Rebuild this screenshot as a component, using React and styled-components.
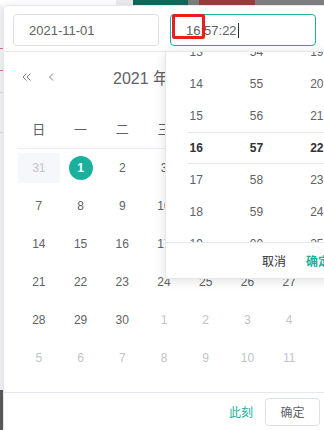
import React from 'react';
import styled, { createGlobalStyle } from 'styled-components';

const GlobalStyle = createGlobalStyle`
  html, body {
    margin: 0;
    padding: 0;
    background: #ffffff;
  }
  body {
    font-family: "Liberation Sans", "Noto Sans CJK SC", sans-serif;
  }
  * {
    box-sizing: border-box;
  }
`;

const TEAL = '#1bb09c';

const Page = styled.div`
  position: relative;
  width: 324px;
  height: 430px;
  overflow: hidden;
  display: grid;
  grid-template-rows: 5px 1fr;
  background: #ffffff;
`;

const TopStrip = styled.div`
  display: flex;
`;

const StripBlock = styled.div`
  width: ${(p) => p.w}px;
  flex: ${(p) => (p.grow ? 1 : 'none')};
  background: ${(p) => p.color};
`;

const SideArea = styled.div`
  display: flex;
`;

const LeftStrip = styled.div`
  width: 3px;
  display: flex;
  flex-direction: column;
  background: #f4f4f6;
`;

const StripSeg = styled.div`
  height: ${(p) => p.h}px;
  flex: ${(p) => (p.grow ? 1 : 'none')};
  background: ${(p) => p.color || 'transparent'};
  border-bottom: ${(p) => (p.line ? `1px solid ${p.line}` : 'none')};
`;

/* the date-time picker popup */
const Popup = styled.div`
  position: absolute;
  left: 3px;
  top: 5px;
  width: 330px;
  background: #ffffff;
  border: 1px solid #e4e7ed;
  border-radius: 4px;
  box-shadow: 0 2px 12px rgba(0, 0, 0, 0.1);
  color: #606266;
`;

const PanelHeader = styled.div`
  display: flex;
  gap: 11px;
  padding: 8px 9px 5px;
  border-bottom: 1px solid #e4e7ed;
`;

const Field = styled.div`
  position: relative;
  width: 146px;
  height: 32px;
  display: flex;
  align-items: center;
  padding: 0 15px;
  border: 1px solid ${(p) => (p.active ? TEAL : '#dcdfe6')};
  border-radius: 4px;
  font-size: 13px;
  color: #606266;
`;

const Caret = styled.span`
  display: inline-block;
  width: 1px;
  height: 15px;
  margin-left: 1px;
  background: #303133;
`;

const Marker = styled.div`
  position: absolute;
  left: 1px;
  top: -1px;
  width: 33px;
  height: 25px;
  border: 3px solid #ee1d1d;
  border-radius: 2px;
`;

const Body = styled.div`
  padding: 10px 0 15px 14px;
`;

const CalHeader = styled.div`
  height: 30px;
  display: flex;
  align-items: center;
  padding-left: 4px;
`;

const NavBtn = styled.button`
  display: flex;
  align-items: center;
  justify-content: flex-start;
  width: ${(p) => p.w}px;
  height: 30px;
  padding: 0;
  border: none;
  background: none;
  color: #606266;
`;

const Title = styled.div`
  margin-left: 41px;
  font-size: 16px;
  color: #606266;
`;

const Table = styled.div`
  margin-top: 17px;
  width: 292px;
`;

const WeekRow = styled.div`
  display: grid;
  grid-template-columns: repeat(7, 1fr);
  height: 40px;
  align-items: center;
  border-bottom: 1px solid #ebeef5;
`;

const WeekCell = styled.div`
  text-align: center;
  font-size: 13px;
  color: #606266;
`;

const DateRow = styled.div`
  display: grid;
  grid-template-columns: repeat(7, 1fr);
`;

const DateCell = styled.div`
  padding: 4px 0;
`;

const CellInner = styled.div`
  height: 30px;
  display: flex;
  align-items: center;
  justify-content: center;
  background: ${(p) => (p.shaded ? '#f5f7fa' : 'transparent')};
`;

const DayNum = styled.span`
  width: 24px;
  height: 24px;
  border-radius: 50%;
  display: flex;
  align-items: center;
  justify-content: center;
  font-size: 12px;
  font-weight: ${(p) => (p.selected ? 700 : 400)};
  color: ${(p) => (p.selected ? '#ffffff' : p.muted ? '#c0c4cc' : '#606266')};
  background: ${(p) => (p.selected ? TEAL : 'transparent')};
`;

const Footer = styled.div`
  display: flex;
  align-items: center;
  justify-content: flex-end;
  gap: 12px;
  height: 38px;
  padding: 4px 12px 4px;
  border-top: 1px solid #e4e7ed;
`;

const LinkBtn = styled.span`
  font-size: 12px;
  color: ${TEAL};
`;

const PlainBtn = styled.button`
  width: 55px;
  height: 28px;
  border: 1px solid #dcdfe6;
  border-radius: 4px;
  background: #ffffff;
  font-family: inherit;
  font-size: 12px;
  color: #606266;
`;

/* time spinner dropdown, lies over the calendar */
const TimePanel = styled.div`
  position: absolute;
  left: 161px;
  top: 45px;
  width: 183px;
  background: #ffffff;
  border: 1px solid #e4e7ed;
  border-radius: 2px;
  box-shadow: 0 2px 12px rgba(0, 0, 0, 0.12);
`;

const Spinner = styled.div`
  position: relative;
  height: 190px;
  overflow: hidden;
  display: grid;
  grid-template-columns: repeat(3, 1fr);
`;

const SelectBand = styled.div`
  position: absolute;
  left: 12%;
  right: 12%;
  top: 80px;
  height: 32px;
  border-top: 1px solid #e4e7ed;
  border-bottom: 1px solid #e4e7ed;
`;

const SpinList = styled.div`
  margin-top: -16px;
`;

const SpinItem = styled.div`
  height: 32px;
  line-height: 32px;
  text-align: center;
  font-size: 12px;
  font-weight: ${(p) => (p.active ? 700 : 400)};
  color: ${(p) => (p.active ? '#303133' : '#606266')};
`;

const TimeFooter = styled.div`
  height: 36px;
  display: flex;
  align-items: center;
  justify-content: flex-end;
  gap: 20px;
  padding-right: 17px;
  border-top: 1px solid #e4e7ed;
`;

const TimeBtn = styled.span`
  font-size: 12px;
  color: ${(p) => (p.primary ? TEAL : '#303133')};
  font-weight: ${(p) => (p.primary ? 700 : 400)};
`;

const DoubleLeft = () => (
  <svg width="10" height="10" viewBox="0 0 10 10" fill="none" stroke="#7a7c80" strokeWidth="1">
    <path d="M4.5 1.5 L1 5 L4.5 8.5" />
    <path d="M8.5 1.5 L5 5 L8.5 8.5" />
  </svg>
);

const SingleLeft = () => (
  <svg width="6" height="10" viewBox="0 0 6 10" fill="none" stroke="#7a7c80" strokeWidth="1">
    <path d="M5 1.5 L1.5 5 L5 8.5" />
  </svg>
);

const weekDays = ['日', '一', '二', '三', '四', '五', '六'];

const weeks = [
  [{ d: 31, m: true, shaded: true }, { d: 1, sel: true }, { d: 2 }, { d: 3 }, { d: 4 }, { d: 5 }, { d: 6 }],
  [7, 8, 9, 10, 11, 12, 13].map((d) => ({ d })),
  [14, 15, 16, 17, 18, 19, 20].map((d) => ({ d })),
  [21, 22, 23, 24, 25, 26, 27].map((d) => ({ d })),
  [{ d: 28 }, { d: 29 }, { d: 30 }, { d: 1, m: true }, { d: 2, m: true }, { d: 3, m: true }, { d: 4, m: true }],
  [5, 6, 7, 8, 9, 10, 11].map((d) => ({ d, m: true })),
];

const spinCols = [
  [13, 14, 15, 16, 17, 18, 19],
  [54, 55, 56, 57, 58, 59, 0],
  [19, 20, 21, 22, 23, 24, 25],
];

const pad = (n) => String(n).padStart(2, '0');

const App = () => {
  return (
    <>
      <GlobalStyle />
      <Page>
        <TopStrip>
          <StripBlock w={116} color="#ffffff" />
          <StripBlock w={17} color="#ececec" />
          <StripBlock w={55} color="#0e6a5a" />
          <StripBlock w={11} color="#7e7e7e" />
          <StripBlock w={56} color="#9a3c3c" />
          <StripBlock grow color="#808080" />
        </TopStrip>
        <SideArea>
          <LeftStrip>
            <StripSeg h={44} line="#e07070" />
            <StripSeg h={22} line="#e07070" />
            <StripSeg h={22} line="#dcdcdc" />
            <StripSeg h={40} line="#dcdcdc" />
            <StripSeg grow />
            <StripSeg h={40} color="#5a5a5a" />
          </LeftStrip>
        </SideArea>

        <Popup>
          <PanelHeader>
            <Field>2021-11-01</Field>
            <Field active>
              16:57:22
              <Caret />
              <Marker />
            </Field>
          </PanelHeader>

          <Body>
            <CalHeader>
              <NavBtn w={26}>
                <DoubleLeft />
              </NavBtn>
              <NavBtn w={24}>
                <SingleLeft />
              </NavBtn>
              <Title>2021 年 11 月</Title>
            </CalHeader>

            <Table>
              <WeekRow>
                {weekDays.map((w) => (
                  <WeekCell key={w}>{w}</WeekCell>
                ))}
              </WeekRow>
              {weeks.map((row, i) => (
                <DateRow key={i}>
                  {row.map((c, j) => (
                    <DateCell key={j}>
                      <CellInner shaded={c.shaded}>
                        <DayNum muted={c.m} selected={c.sel}>
                          {c.d}
                        </DayNum>
                      </CellInner>
                    </DateCell>
                  ))}
                </DateRow>
              ))}
            </Table>
          </Body>

          <Footer>
            <LinkBtn>此刻</LinkBtn>
            <PlainBtn>确定</PlainBtn>
          </Footer>

          <TimePanel>
            <Spinner>
              <SelectBand />
              {spinCols.map((col, i) => (
                <SpinList key={i}>
                  {col.map((n, k) => (
                    <SpinItem key={k} active={k === 3}>
                      {pad(n)}
                    </SpinItem>
                  ))}
                </SpinList>
              ))}
            </Spinner>
            <TimeFooter>
              <TimeBtn>取消</TimeBtn>
              <TimeBtn primary>确定</TimeBtn>
            </TimeFooter>
          </TimePanel>
        </Popup>
      </Page>
    </>
  );
};

export default App;
